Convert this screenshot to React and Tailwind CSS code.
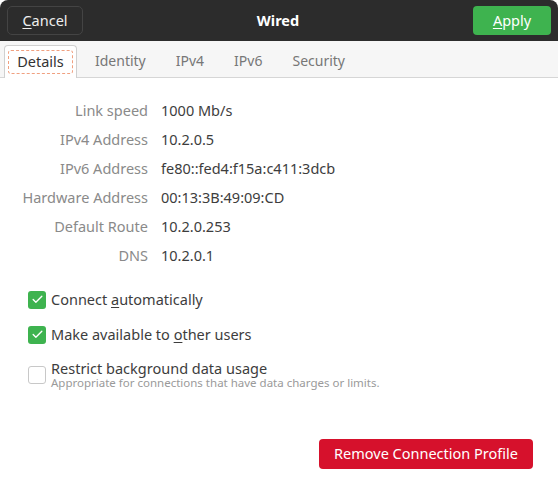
import { Check } from "lucide-react";

const DETAILS = [
  { label: "Link speed", value: "1000 Mb/s" },
  { label: "IPv4 Address", value: "10.2.0.5" },
  { label: "IPv6 Address", value: "fe80::fed4:f15a:c411:3dcb" },
  { label: "Hardware Address", value: "00:13:3B:49:09:CD" },
  { label: "Default Route", value: "10.2.0.253" },
  { label: "DNS", value: "10.2.0.1" },
];

const TABS = ["Details", "Identity", "IPv4", "IPv6", "Security"];

function Checkbox({ checked }) {
  return checked ? (
    <span className="flex h-[18px] w-[18px] shrink-0 items-center justify-center rounded-[3px] bg-[#3eb34f]">
      <Check className="h-[13px] w-[13px] text-white" strokeWidth={2.5} />
    </span>
  ) : (
    <span className="h-[18px] w-[18px] shrink-0 rounded-[3px] border border-[#c8c8c8] bg-white" />
  );
}

export default function App() {
  return (
    <div
      className="h-[492px] w-[558px] overflow-hidden bg-white text-[14.5px] text-[#3d3d3d]"
      style={{ fontFamily: '"Noto Sans", "Open Sans", sans-serif' }}
    >
      <div className="flex h-[41px] items-center justify-between rounded-t-[8px] bg-[#2c2c2c] px-[7px]">
        <button className="h-[29px] w-[76px] rounded-[5px] border border-[#444] bg-[#2c2c2c] text-[#eee]">
          <span className="underline underline-offset-2">C</span>ancel
        </button>
        <span className="font-bold text-white">Wired</span>
        <button className="h-[29px] w-[78px] rounded-[4px] bg-[#3eb34f] text-white">
          <span className="underline underline-offset-2">A</span>pply
        </button>
      </div>

      <div className="flex h-[37px] items-end border-b border-[#d6d6d6] bg-[#f6f6f6] pl-[4px] text-[14px]">
        {TABS.map((tab, i) =>
          i === 0 ? (
            <div
              key={tab}
              className="-mb-px mr-[3px] flex h-[33px] w-[73px] items-center justify-center rounded-t-[4px] border border-b-0 border-[#d0d0d0] bg-white text-[14.5px]"
            >
              <span className="flex h-[24px] w-[65px] items-center justify-center rounded-[3px] border border-dashed border-[#f0a080] text-[#333]">
                {tab}
              </span>
            </div>
          ) : (
            <div key={tab} className="flex h-[33px] items-center px-[15px] text-[#777]">
              {tab}
            </div>
          )
        )}
      </div>

      <div className="grid grid-cols-[148px_1fr] gap-x-[13px] gap-y-[9px] pt-[22px]">
        {DETAILS.map(({ label, value }) => (
          <div key={label} className="contents">
            <span className="h-[20px] whitespace-nowrap text-right leading-[20px] text-[#8a8a8a]">{label}</span>
            <span className="h-[20px] leading-[20px] text-[#3d3d3d]">{value}</span>
          </div>
        ))}
      </div>

      <div className="flex flex-col gap-[16px] pl-[28px] pt-[25px]">
        <label className="flex h-[19px] items-center gap-[5px]">
          <Checkbox checked />
          <span>
            Connect <span className="underline underline-offset-2">a</span>utomatically
          </span>
        </label>
        <label className="flex h-[19px] items-center gap-[5px]">
          <Checkbox checked />
          <span>
            Make available to <span className="underline underline-offset-2">o</span>ther users
          </span>
        </label>
        <label className="flex items-center gap-[5px]">
          <Checkbox />
          <span className="flex flex-col">
            <span className="leading-[16px]">Restrict background data usage</span>
            <span className="text-[11.5px] leading-[14px] text-[#9a9a9a]">
              Appropriate for connections that have data charges or limits.
            </span>
          </span>
        </label>
      </div>

      <div className="flex justify-end pr-[25px] pt-[49px]">
        <button className="h-[30px] w-[214px] rounded-[4px] bg-[#d6112c] text-white">
          Remove Connection Profile
        </button>
      </div>
    </div>
  );
}
